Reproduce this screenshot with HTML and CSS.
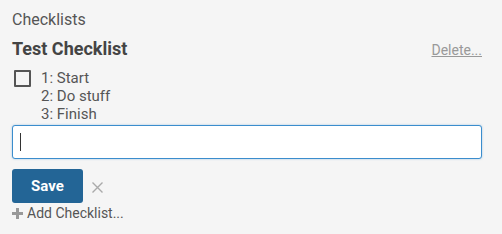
FILE: index.html
```html
<!DOCTYPE html>
<html lang="en">
<head>
    <meta charset="UTF-8">
    <title>Checklists</title>
    <link rel="stylesheet" href="styles.css">
</head>
<body>
    <div class="panel">
        <div class="panel-title">Checklists</div>
        <div class="checklist">
            <div class="checklist-head">
                <span class="checklist-name">Test Checklist</span>
                <a class="delete-link" href="#">Delete...</a>
            </div>
            <div class="item">
                <span class="box"></span>
                <div class="item-text">
                    <div>1: Start</div>
                    <div>2: Do stuff</div>
                    <div>3: Finish</div>
                </div>
            </div>
            <div class="input-wrap">
                <input class="item-input" type="text" autofocus>
                <span class="caret"></span>
            </div>
            <div class="actions">
                <button class="btn-save">Save</button>
                <svg class="cancel" width="11" height="11" viewBox="0 0 11 11">
                    <path d="M0.5 0.5L10.5 10.5M10.5 0.5L0.5 10.5" stroke="#aaa" stroke-width="1.4"/>
                </svg>
            </div>
        </div>
        <a class="add-link" href="#">
            <svg class="plus" width="11" height="11" viewBox="0 0 11 11">
                <path d="M5.5 0V11M0 5.5H11" stroke="#999" stroke-width="3"/>
            </svg>Add Checklist...
        </a>
    </div>
</body>
</html>
```

FILE: styles.css
```css
body {
    margin: 0;
    background: #f5f5f5;
    font-family: Roboto, 'Liberation Sans', sans-serif;
    color: #555;
}
.panel {
    padding: 10px 20px 0 12px;
}
.panel-title {
    font-size: 16px;
    line-height: 20px;
}
.checklist-head {
    display: flex;
    justify-content: space-between;
    align-items: baseline;
    margin-top: 7px;
}
.checklist-name {
    font-size: 18px;
    font-weight: bold;
    color: #444;
    line-height: 24px;
}
.delete-link {
    font-size: 14px;
    color: #999;
    text-decoration: underline;
}
.item {
    display: flex;
    margin-top: 8px;
}
.box {
    width: 13px;
    height: 13px;
    border: 2px solid #555;
    border-radius: 1px;
    margin: 1px 10px 0 2px;
}
.item-text {
    font-size: 15px;
    line-height: 18px;
}
.input-wrap {
    position: relative;
    margin-top: 2px;
}
.item-input {
    display: block;
    box-sizing: border-box;
    width: 100%;
    height: 34px;
    border: 1px solid #3b8dcd;
    border-radius: 3px;
    box-shadow: 0 0 2px rgba(59, 141, 205, 0.5);
    background: #fff;
    outline: none;
    font-size: 14px;
    padding: 0 8px;
    caret-color: #333;
}
.caret {
    position: absolute;
    left: 8px;
    top: 8px;
    width: 1px;
    height: 18px;
    background: #333;
}
.actions {
    display: flex;
    align-items: center;
    margin-top: 10px;
}
.btn-save {
    width: 71px;
    height: 34px;
    background: #236596;
    color: #fff;
    border: none;
    border-radius: 3px;
    font-family: Roboto, 'Liberation Sans', sans-serif;
    font-size: 15px;
    font-weight: bold;
}
.cancel {
    margin-left: 9px;
    margin-top: 3px;
}
.add-link {
    display: flex;
    align-items: center;
    font-size: 14px;
    color: #555;
    text-decoration: none;
    line-height: 18px;
    margin-top: 1px;
}
.plus {
    margin-right: 4px;
}
```
